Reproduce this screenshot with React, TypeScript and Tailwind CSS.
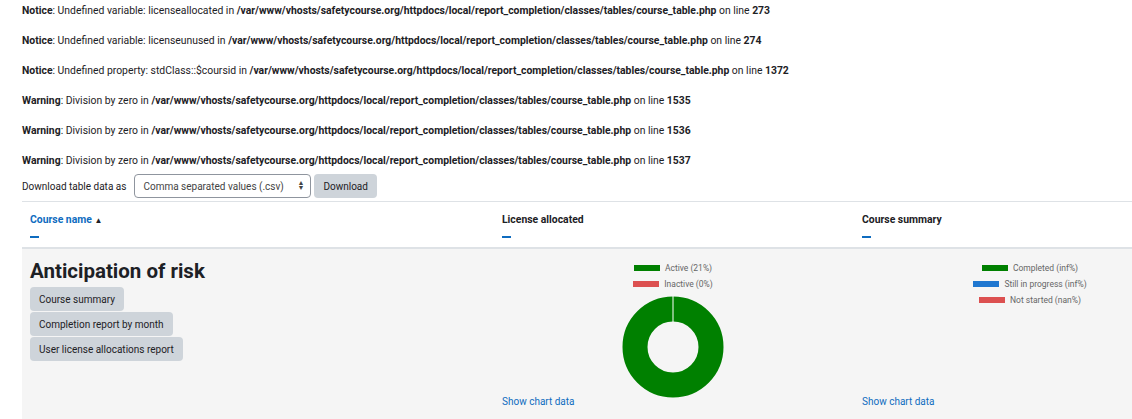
import React from "react";

const msgs: [string, string, string][] = [
  ["Notice", "Undefined variable: licenseallocated in ", "273"],
  ["Notice", "Undefined variable: licenseunused in ", "274"],
  ["Notice", "Undefined property: stdClass::$coursid in ", "1372"],
  ["Warning", "Division by zero in ", "1535"],
  ["Warning", "Division by zero in ", "1536"],
  ["Warning", "Division by zero in ", "1537"],
];
const path = "/var/www/vhosts/safetycourse.org/httpdocs/local/report_completion/classes/tables/course_table.php";

function Legend({ items }: { items: [string, string][] }) {
  return (
    <div className="flex flex-col items-center gap-[3px] text-[8.5px] text-[#666]">
      {items.map(([c, t]) => (
        <div key={t} className="flex items-center gap-[5px]">
          <span className="inline-block w-[26px] h-[6px]" style={{ background: c }} />
          <span>{t}</span>
        </div>
      ))}
    </div>
  );
}

export default function App() {
  return (
    <div className="w-[1132px] h-[419px] overflow-hidden bg-white text-[#1d2125]" style={{ fontFamily: "Roboto, 'Noto Sans', sans-serif" }}>
      <div className="pl-[22px] pt-[4px] text-[10.4px]">
        {msgs.map(([k, m, l]) => (
          <div key={l} className="h-[30px] leading-[13px]">
            <b>{k}</b>: {m}<b>{path}</b> on line <b>{l}</b>
          </div>
        ))}
      </div>
      <div className="pl-[22px] flex items-center gap-[3px] text-[10px] -mt-[10px]">
        <span className="mr-[5px]">Download table data as</span>
        <div className="w-[177px] h-[24px] border border-[#8f959e] rounded-[4px] flex items-center justify-between pl-[8px] pr-[6px] text-[#444]">
          <span>Comma separated values (.csv)</span>
          <span className="text-[7px] leading-[5px] flex flex-col">▲<br />▼</span>
        </div>
        <div className="h-[24px] px-[9px] rounded-[4px] bg-[#ced4da] flex items-center text-[#1d2125]">Download</div>
      </div>
      <div className="ml-[22px] mt-[3px] border-t border-[#dee2e6]">
        <div className="h-[47px] flex text-[10.4px] font-bold border-b-2 border-[#dee2e6]">
          <div className="w-[480px] pl-[8px] pt-[10px]">
            <span className="text-[#0f6cbf]">Course name</span> <span className="text-[8px]">▲</span>
            <div className="w-[9px] h-[2px] bg-[#0f6cbf] mt-[8px]" />
          </div>
          <div className="w-[360px] pt-[10px]">
            License allocated
            <div className="w-[9px] h-[2px] bg-[#0f6cbf] mt-[8px]" />
          </div>
          <div className="flex-1 pt-[10px]">
            Course summary
            <div className="w-[9px] h-[2px] bg-[#0f6cbf] mt-[8px]" />
          </div>
        </div>
        <div className="h-[171px] bg-[#f5f5f5] flex">
          <div className="w-[480px] pl-[8px] pt-[10px]">
            <h2 className="text-[20.5px] font-bold leading-[24px] mb-[4px]">Anticipation of risk</h2>
            <div className="flex flex-col items-start text-[10px]">
              {["Course summary", "Completion report by month", "User license allocations report"].map(t => (
                <div key={t} className="bg-[#ced4da] rounded-[4px] px-[9px] h-[24px] flex items-center mb-[1px]">{t}</div>
              ))}
            </div>
          </div>
          <div className="w-[360px] relative">
            <div className="absolute left-[111px] top-[13px] w-[120px] flex flex-col items-center">
              <Legend items={[["#008000", "Active (21%)"], ["#dc5050", "Inactive (0%)"]]} />
              <svg width="102" height="102" viewBox="0 0 102 102" className="mt-[5px]">
                <circle cx="51" cy="51" r="38" fill="none" stroke="#008000" strokeWidth="25" />
                <line x1="51" y1="0" x2="51" y2="26" stroke="#fff" strokeWidth="1" />
              </svg>
            </div>
            <div className="absolute left-0 top-[145px] text-[10px] text-[#0f6cbf]">Show chart data</div>
          </div>
          <div className="flex-1 relative">
            <div className="absolute left-[108px] top-[13px] w-[120px] flex justify-center">
              <Legend items={[["#008000", "Completed (inf%)"], ["#1f77d0", "Still in progress (inf%)"], ["#dc5050", "Not started (nan%)"]]} />
            </div>
            <div className="absolute left-0 top-[145px] text-[10px] text-[#0f6cbf]">Show chart data</div>
          </div>
        </div>
      </div>
    </div>
  );
}
